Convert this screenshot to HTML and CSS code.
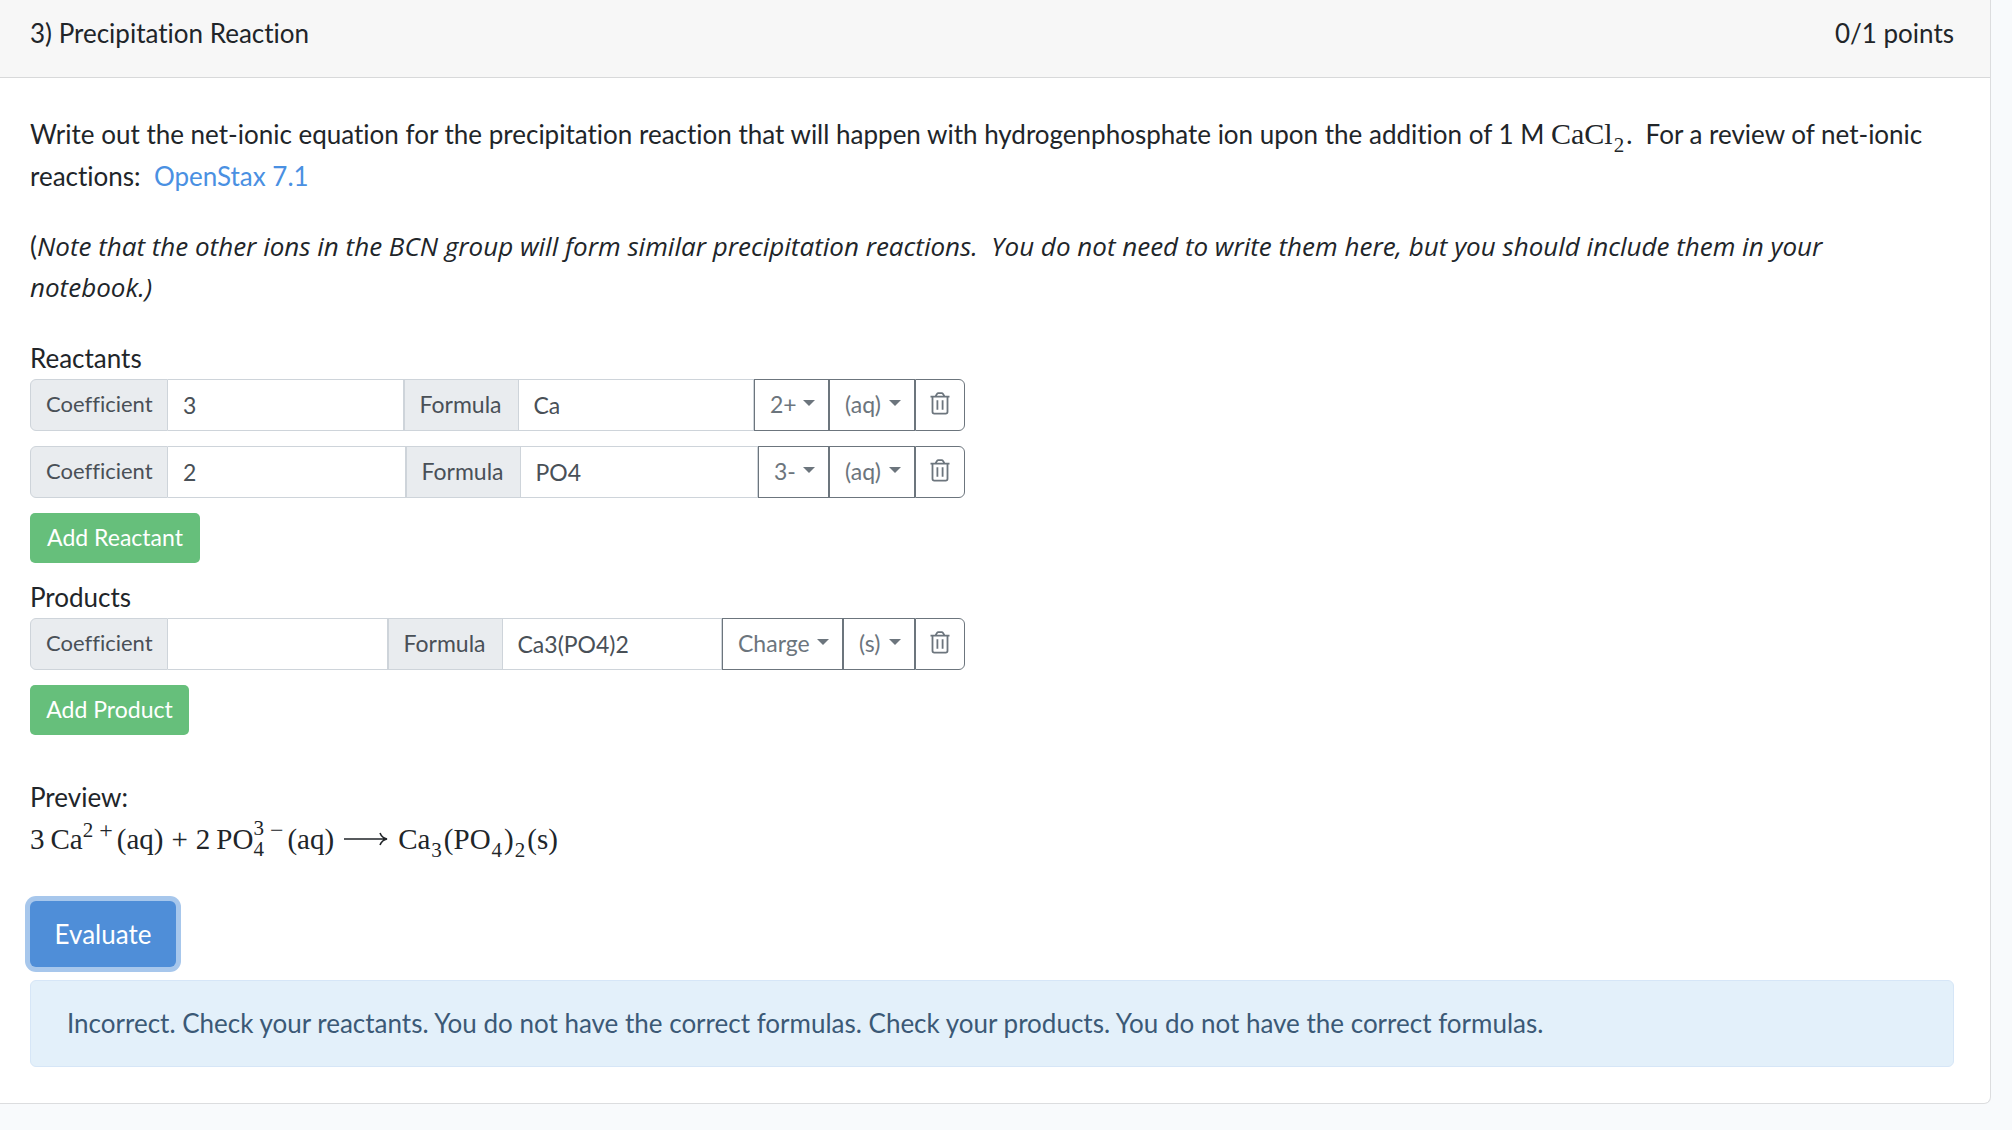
FILE: index.html
```html
<!DOCTYPE html>
<html lang="en">
<head>
<meta charset="utf-8">
<title>Precipitation Reaction</title>
<meta name="viewport" content="width=device-width, initial-scale=1">
<link rel="stylesheet" href="styles.css">
</head>
<body>
<svg class="sprite" aria-hidden="true">
  <symbol id="trash" viewBox="0 0 20 23">
    <path d="M0.5 4.6h19M5.5 4.4l1.6-2.6q0.4-0.7 1.2-0.7h3.4q0.8 0 1.2 0.7l1.6 2.6M2.5 4.6v15.2q0 1.8 1.8 1.8h11.4q1.8 0 1.8-1.8v-15.2M7.4 8.2v9.6M12.6 8.2v9.6" fill="none" stroke="currentColor" stroke-width="1.8"/>
  </symbol>
</svg>
<main class="card">
  <header class="card-header">
    <span>3) Precipitation Reaction</span>
    <span>0/1 points</span>
  </header>
  <div class="card-body">
    <p class="text">Write out the net-ionic equation for the precipitation reaction that will happen with hydrogenphosphate ion upon the addition of 1 M <span class="math">CaCl<span class="sub">2</span></span>.&nbsp; For a review of net-ionic reactions:&nbsp; <a href="#openstax">OpenStax 7.1</a></p>
    <p class="text">(<em>Note that the other ions in the BCN group will form similar precipitation reactions.&nbsp; You do not need to write them here, but you should include them in your notebook.)</em></p>

    <section class="side">
      <h2 class="label">Reactants</h2>
      <div class="group">
        <label class="addon" for="r1c">Coefficient</label>
        <input class="field" id="r1c" type="text" value="3">
        <label class="addon addon-formula" for="r1f">Formula</label>
        <input class="field" id="r1f" type="text" value="Ca">
        <span class="picker picker-plus"><select aria-label="Charge"><option>2+</option></select></span>
        <span class="picker picker-aq"><select aria-label="State"><option>(aq)</option></select></span>
        <button class="remove" type="button" aria-label="Remove"><svg><use href="#trash"/></svg></button>
      </div>
      <div class="group">
        <label class="addon" for="r2c">Coefficient</label>
        <input class="field" id="r2c" type="text" value="2">
        <label class="addon addon-formula" for="r2f">Formula</label>
        <input class="field" id="r2f" type="text" value="PO4">
        <span class="picker picker-minus"><select aria-label="Charge"><option>3-</option></select></span>
        <span class="picker picker-aq"><select aria-label="State"><option>(aq)</option></select></span>
        <button class="remove" type="button" aria-label="Remove"><svg><use href="#trash"/></svg></button>
      </div>
      <button class="add add-reactant" type="button">Add Reactant</button>
    </section>

    <section class="side">
      <h2 class="label">Products</h2>
      <div class="group">
        <label class="addon" for="p1c">Coefficient</label>
        <input class="field" id="p1c" type="text" value="">
        <label class="addon addon-formula" for="p1f">Formula</label>
        <input class="field" id="p1f" type="text" value="Ca3(PO4)2">
        <span class="picker picker-charge"><select aria-label="Charge"><option>Charge</option></select></span>
        <span class="picker picker-s"><select aria-label="State"><option>(s)</option></select></span>
        <button class="remove" type="button" aria-label="Remove"><svg><use href="#trash"/></svg></button>
      </div>
      <button class="add add-product" type="button">Add Product</button>
    </section>

    <section class="preview">
      <h2 class="label">Preview:</h2>
      <div class="equation math"><span class="num">3</span>Ca<span class="sup">2</span><span class="sup sign">+</span>(aq)<span class="plus">+</span><span class="num">2</span>PO<span class="stack"><span>3</span><span>4</span></span><span class="sup sign">−</span>(aq)<svg class="arrow" viewBox="0 0 44 14" role="img" aria-label="yields"><path d="M0 7h42M36 1q2 5 7 6q-5 1-7 6" fill="none" stroke="currentColor" stroke-width="1.6"/></svg>Ca<span class="sub">3</span>(PO<span class="sub">4</span>)<span class="sub">2</span>(s)</div>
    </section>

    <button class="evaluate" type="button">Evaluate</button>
    <div class="alert" role="status">Incorrect. Check your reactants. You do not have the correct formulas. Check your products. You do not have the correct formulas.</div>
  </div>
</main>
</body>
</html>
```
FILE: styles.css
```css
* {
  box-sizing: border-box;
}

body {
  margin: 0;
  background: #f8fafc;
  color: #212529;
  font-family: Lato, "Open Sans", sans-serif;
  font-size: 26px;
  font-variant-ligatures: none;
  line-height: 41px;
}

.sprite {
  display: none;
}

.card {
  margin-right: 21px;
  background: #fff;
  border: solid #dcdddf;
  border-width: 0 1px 1px 0;
  border-radius: 0 0 7px 0;
}

.card-header {
  display: flex;
  justify-content: space-between;
  padding: 13px 36px 23px 30px;
  background: #f7f7f7;
  border-bottom: 1px solid #d8d9da;
}

.card-body {
  padding: 36px 36px 36px 30px;
}

.text {
  margin: 0 0 29px;
  padding-right: 8px;
}

.text em {
  font-family: "Open Sans", sans-serif;
  font-size: 26px;
}

a {
  color: #4a90e2;
  text-decoration: none;
}

.math {
  font-family: "Liberation Serif", serif;
  font-size: 29px;
  line-height: 1;
}

.text .math {
  font-size: 30px;
}

.sub,
.sup,
.stack {
  font-size: 21px;
  line-height: 1;
}

.sub {
  padding: 0 2px 0 1px;
  vertical-align: -8px;
}

.sign {
  padding: 0 4px 0 6px;
}

.label {
  margin: 0;
  font-size: 26px;
  font-weight: 400;
  line-height: 42px;
}

.side {
  max-width: 935px;
  margin-bottom: 13px;
}

.group {
  display: flex;
  height: 52px;
  margin-bottom: 15px;
  font-size: 23px;
  line-height: 36px;
}

.addon {
  flex: 0 0 138px;
  padding: 6px 0 8px 15px;
  background: #e9ecef;
  border: 1px solid #ced4da;
  border-radius: 6px 0 0 6px;
  color: #495057;
  font-size: 22px;
}

.addon-formula {
  flex-basis: 115px;
  border-radius: 0;
  font-size: 23px;
}

.field {
  flex: 1 1 0;
  min-width: 0;
  padding: 0 15px;
  background: #fff;
  border: solid #ced4da;
  border-width: 1px 1px 1px 0;
  border-radius: 0;
  color: #495057;
  font: inherit;
}

.picker {
  position: relative;
  display: flex;
}

.picker::after {
  content: "";
  position: absolute;
  top: 21px;
  right: 14px;
  border: 6px solid transparent;
  border-top-color: #6c757d;
  border-bottom: 0;
  pointer-events: none;
}

.picker select {
  width: 100%;
  padding: 0 15px 2px;
  appearance: none;
  background: #fff;
  border: 1px solid #6c757d;
  border-radius: 0;
  color: #6c757d;
  font: inherit;
}

.picker-plus {
  width: 75px;
}

.picker-minus {
  width: 71px;
}

.picker-charge {
  width: 121px;
}

.picker-aq {
  width: 86px;
}

.picker-s {
  width: 72px;
}

.remove {
  width: 50px;
  padding: 0 0 4px;
  background: #fff;
  border: 1px solid #6c757d;
  border-radius: 0 6px 6px 0;
  color: #6c757d;
}

.remove svg {
  width: 20px;
  height: 23px;
  vertical-align: middle;
}

.add {
  display: block;
  height: 50px;
  padding: 0 0 2px;
  background: #66bf7b;
  border: 0;
  border-radius: 5px;
  color: #fff;
  font: inherit;
  font-size: 23px;
}

.add-reactant {
  width: 170px;
}

.add-product {
  width: 159px;
}

.preview {
  padding-top: 28px;
}

.equation {
  display: flex;
  align-items: center;
  height: 42px;
  white-space: nowrap;
}

.evaluate {
  display: block;
  width: 146px;
  height: 66px;
  margin: 41px 0 13px;
  padding: 0;
  background: #4f8ed8;
  border: 0;
  border-radius: 6px;
  box-shadow: 0 0 0 5px #a7c7ec;
  color: #fff;
  font: inherit;
}

.alert {
  padding: 22px 36px;
  background: #e3f0fa;
  border: 1px solid #d6e6f7;
  border-radius: 6px;
  color: #3b5976;
}

.num {
  margin-right: 6px;
}

.plus {
  margin: 0 8px;
}

.equation .sub {
  padding-top: 22px;
}

.equation .sup {
  padding-bottom: 18px;
}

.equation .sign {
  font-size: 24px;
}

.stack {
  display: grid;
}

.arrow {
  width: 44px;
  height: 14px;
  margin: 0 10px;
}
```
